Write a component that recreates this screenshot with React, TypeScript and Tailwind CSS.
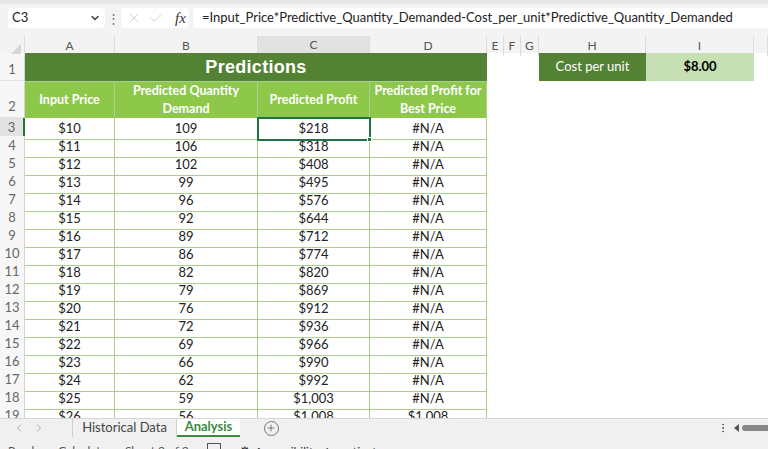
import React from "react";
import { ChevronDown, X, Check, Plus, ChevronLeft, ChevronRight, MoreVertical } from "lucide-react";

const COLS = "grid grid-cols-[25px_90px_143px_112px_117px_17px_17px_18px_107px_108px_1fr]";

const ROWS = [
  ["$10", "109", "$218", "#N/A"],
  ["$11", "106", "$318", "#N/A"],
  ["$12", "102", "$408", "#N/A"],
  ["$13", "99", "$495", "#N/A"],
  ["$14", "96", "$576", "#N/A"],
  ["$15", "92", "$644", "#N/A"],
  ["$16", "89", "$712", "#N/A"],
  ["$17", "86", "$774", "#N/A"],
  ["$18", "82", "$820", "#N/A"],
  ["$19", "79", "$869", "#N/A"],
  ["$20", "76", "$912", "#N/A"],
  ["$21", "72", "$936", "#N/A"],
  ["$22", "69", "$966", "#N/A"],
  ["$23", "66", "$990", "#N/A"],
  ["$24", "62", "$992", "#N/A"],
  ["$25", "59", "$1,003", "#N/A"],
  ["$26", "56", "$1,008", "$1,008"],
];

const HEADERS = ["A", "B", "C", "D", "E", "F", "G", "H", "I", ""];

function RowNum({ n, active }: { n: number; active?: boolean }) {
  return (
    <div
      className={
        "flex items-end justify-center pb-[1px] text-[13px] text-[#666] border-b border-[#e3e3e3] " +
        (active ? "bg-[#e2e2e2] border-r-2 border-r-[#217346]" : "bg-[#f7f7f7] border-r border-r-[#d4d4d4]")
      }
    >
      {n}
    </div>
  );
}

export default function App() {
  return (
    <div className="w-[768px] h-[449px] overflow-hidden bg-white flex flex-col font-['Lato','Open_Sans',sans-serif] text-[#222]">
      {/* formula bar */}
      <div className="h-9 shrink-0 bg-[#f3f3f3] border-t-4 border-[#e6e6e6] flex items-center pl-2 pb-1">
        <div className="w-[97px] h-5 bg-white rounded flex items-center justify-between px-1 text-[13px]">
          <span>C3</span>
          <ChevronDown className="w-3 h-3 text-[#444]" strokeWidth={3} />
        </div>
        <div className="w-4 flex justify-center text-[#777] text-[13px] leading-none">⋮</div>
        <div className="w-[68px] h-5 bg-white rounded flex items-center gap-[6px] pl-[5px]">
          <X className="w-4 h-4 text-[#c8c8c8]" strokeWidth={1.2} />
          <Check className="w-4 h-4 text-[#c8c8c8]" strokeWidth={1.2} />
          <span className="ml-[5px] font-['Liberation_Serif',serif] italic text-[15px] text-[#333]">fx</span>
        </div>
        <div className="ml-1 flex-1 h-5 bg-white rounded-l flex items-center pl-[9px] text-[13px] whitespace-nowrap">
          =Input_Price*Predictive_Quantity_Demanded-Cost_per_unit*Predictive_Quantity_Demanded
        </div>
      </div>

      {/* sheet */}
      <div className="h-[382px] shrink-0 overflow-hidden">
        <div className={COLS + " h-[17px] bg-[#f3f3f3] text-[12px] text-[#555]"}>
          <div className="relative border-r border-[#dcdcdc]">
            <div className="absolute right-[3px] bottom-[2px] w-0 h-0 border-l-[10px] border-l-transparent border-b-[10px] border-b-[#d6d6d6]" />
          </div>
          {HEADERS.map((h, i) => (
            <div
              key={i}
              className={
                "flex items-center justify-center border-r border-[#dcdcdc] " +
                (h === "C" ? "bg-[#e2e2e2] border-b-2 border-b-[#217346]" : "")
              }
            >
              {h}
            </div>
          ))}
        </div>

        {/* row 1 */}
        <div className={COLS + " h-7"}>
          <RowNum n={1} />
          <div className="col-span-4 bg-[#548235] flex items-center justify-center text-white font-bold text-[18px] font-['Liberation_Sans',sans-serif] tracking-[0.3px]">
            Predictions
          </div>
          <div />
          <div />
          <div />
          <div className="bg-[#548235] text-white text-[13px] flex items-center justify-center">Cost per unit</div>
          <div className="bg-[#c6e0b4] text-[13px] font-bold text-black flex items-center justify-center">$8.00</div>
          <div />
        </div>

        {/* row 2 */}
        <div className={COLS + " h-[37px]"}>
          <RowNum n={2} />
          {["Input Price", "Predicted Quantity Demand", "Predicted Profit", "Predicted Profit for Best Price"].map((t) => (
            <div
              key={t}
              className="bg-[#8dc84b] text-white font-bold text-[12.5px] leading-[18px] flex items-center justify-center text-center px-[2px] border-r border-[#a9d08e] border-t border-t-[#a9d08e]"
            >
              {t}
            </div>
          ))}
        </div>

        {ROWS.map((r, i) => (
          <div key={i} className={COLS + " h-[18px]"}>
            <RowNum n={i + 3} active={i === 0} />
            {r.map((v, j) => (
              <div
                key={j}
                className={
                  "flex items-center justify-center text-[13px] border-b border-r border-[#a9d08e] " +
                  (i === 0 && j === 2 ? "outline-2 outline-[#217346] -outline-offset-1 relative" : "")
                }
              >
                {v}
                {i === 0 && j === 2 && (
                  <div className="absolute -right-[3px] -bottom-[3px] w-[5px] h-[5px] bg-[#217346] border border-white" />
                )}
              </div>
            ))}
          </div>
        ))}
      </div>

      {/* tab bar */}
      <div className="h-[19px] shrink-0 bg-[#f0f0f0] border-t border-[#d6d6d6] flex items-stretch text-[13px]">
        <div className="w-[58px] flex items-center justify-center gap-2 text-[#aaa]">
          <ChevronLeft className="w-3 h-3" />
          <ChevronRight className="w-3 h-3" />
        </div>
        <div className="w-[15px] border-r border-[#d0d0d0]" />
        <div className="w-[104px] flex items-center justify-center text-[#444] border-r border-[#d0d0d0]">Historical Data</div>
        <div className="w-[63px] bg-white flex items-center justify-center font-bold text-[#3b8a3e] border-b-2 border-[#3b8a3e]">
          Analysis
        </div>
        <div className="w-[62px] flex items-center justify-center">
          <div className="w-[15px] h-[15px] rounded-full border border-[#777] flex items-center justify-center">
            <Plus className="w-[10px] h-[10px] text-[#666]" />
          </div>
        </div>
        <div className="flex-1" />
        <div className="w-[14px] flex items-center justify-center">
          <MoreVertical className="w-3 h-3 text-[#555]" />
        </div>
        <div className="w-[38px] flex items-center gap-[3px] pl-1">
          <div className="w-0 h-0 border-y-[4px] border-y-transparent border-r-[5px] border-r-[#555]" />
          <div className="flex-1 h-[6px] bg-[#888] rounded-l-full" />
        </div>
      </div>

      {/* status bar */}
      <div className="h-5 shrink-0 bg-[#f0f0f0] flex items-start pt-[5px] pl-2 gap-[18px] text-[12px] text-[#555]">
        <span>Ready</span>
        <span>Calculate</span>
        <span>Sheet 2 of 2</span>
        <span className="w-[14px] h-[11px] border border-[#555] mt-[1px]" />
        <span className="flex items-center gap-1 text-[#333]">
          <span className="text-[13px]">⚙</span>
          Accessibility: Investigate
        </span>
      </div>
    </div>
  );
}
